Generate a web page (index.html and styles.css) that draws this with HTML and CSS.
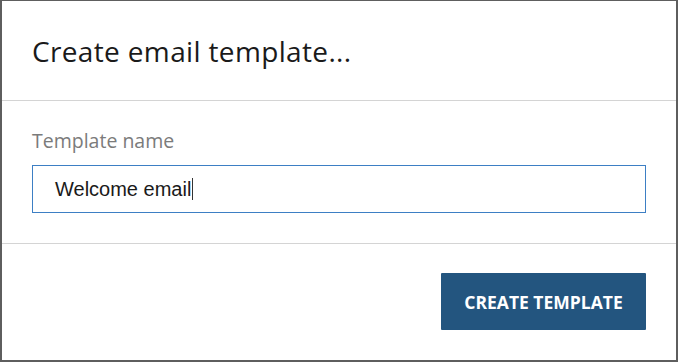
FILE: index.html
```html
<!DOCTYPE html>
<html>
<head>
<meta charset="utf-8">
<link rel="stylesheet" href="styles.css">
</head>
<body>
<div class="dialog">
  <div class="dialog-header">
    <h1 class="dialog-title">Create email template...</h1>
  </div>
  <div class="dialog-body">
    <label class="field-label" for="tpl">Template name</label>
    <div class="field-input"><span class="field-value">Welcome email</span><span class="caret"></span></div>
  </div>
  <div class="dialog-footer">
    <button class="btn-primary">CREATE TEMPLATE</button>
  </div>
</div>
</body>
</html>
```
FILE: styles.css
```css
html, body {
  margin: 0;
  padding: 0;
  background: #ffffff;
}
.dialog {
  width: 678px;
  height: 362px;
  box-sizing: border-box;
  border-style: solid;
  border-color: #5e5e5e;
  border-width: 1px 2px 2px 2px;
  display: flex;
  flex-direction: column;
  font-family: "Open Sans", sans-serif;
}
.dialog-header {
  height: 100px;
  flex: none;
  box-sizing: border-box;
  border-bottom: 1px solid #d4d4d4;
  padding-left: 30px;
  display: flex;
  align-items: center;
}
.dialog-title {
  margin: 0;
  font-size: 28px;
  letter-spacing: 0.35px;
  font-weight: 400;
  color: #1a1a1a;
  line-height: 38px;
}
.dialog-body {
  height: 143px;
  flex: none;
  box-sizing: border-box;
  border-bottom: 1px solid #d4d4d4;
  padding: 27px 30px 0 30px;
  display: flex;
  flex-direction: column;
}
.field-label {
  font-size: 19.5px;
  color: #7b7b7b;
  line-height: 26px;
}
.field-input {
  margin-top: 11px;
  height: 48px;
  box-sizing: border-box;
  border: 1px solid #3d7fc4;
  padding-left: 22px;
  display: flex;
  align-items: center;
  font-family: "Liberation Sans", Arial, sans-serif;
  font-size: 20px;
  color: #1a1a1a;
}
.caret {
  display: inline-block;
  width: 1px;
  height: 22px;
  background: #333;
  margin-left: 1px;
}
.dialog-footer {
  flex: 1;
  display: flex;
  justify-content: flex-end;
  align-items: flex-start;
  padding: 29px 30px 0 0;
}
.btn-primary {
  width: 205px;
  height: 57px;
  border: none;
  border-radius: 1px;
  background: #23557f;
  color: #ffffff;
  font-family: "Open Sans", sans-serif;
  font-weight: 700;
  font-size: 17.5px;
  padding: 0;
  cursor: pointer;
}
```
